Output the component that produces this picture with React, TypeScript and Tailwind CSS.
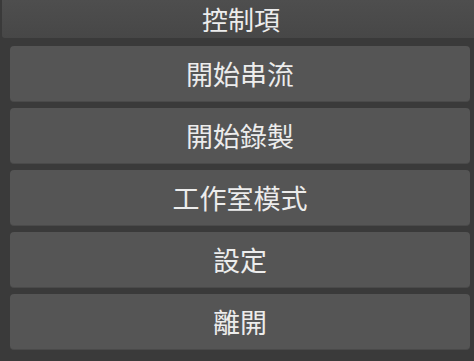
const items = ["開始串流", "開始錄製", "工作室模式", "設定", "離開"];

export default function App() {
  return (
    <div
      className="w-[474px] h-[361px] overflow-hidden bg-[#3a3a3a] flex flex-col"
      style={{ fontFamily: '"Noto Sans CJK TC", "Noto Sans", sans-serif' }}
    >
      {/* Dock title */}
      <div className="h-[38px] ml-[2px] mr-[-6px] shrink-0 rounded-b-[3px] bg-gradient-to-b from-[#4e4e4e] to-[#474747] flex items-center justify-center">
        <span className="text-[26px] leading-none text-[#ececec]">控制項</span>
      </div>

      {/* Controls */}
      <div className="flex flex-col gap-[6px] pt-[8px] pl-[10px] pr-[4px]">
        {items.map((label) => (
          <button
            key={label}
            className="h-[56px] rounded-[4px] bg-[#555555] border-b border-[#4a4a4a] flex items-center justify-center text-[27px] leading-none text-[#ececec]"
          >
            {label}
          </button>
        ))}
      </div>
    </div>
  );
}
